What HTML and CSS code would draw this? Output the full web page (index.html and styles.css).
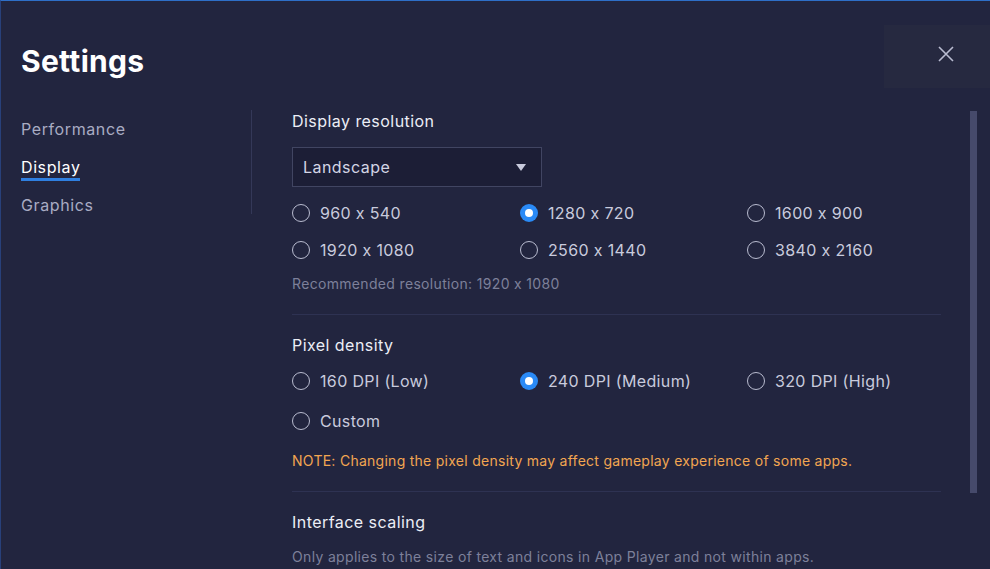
FILE: index.html
```html
<!DOCTYPE html>
<html lang="en">
<head>
<meta charset="utf-8">
<title>Settings</title>
<link rel="stylesheet" href="styles.css">
</head>
<body>
<div class="window">
  <header class="header">
    <h1 class="title">Settings</h1>
    <button class="close" aria-label="Close">
      <svg width="16" height="16" viewBox="0 0 16 16"><path d="M1 1L15 15M15 1L1 15" stroke="#b9bcd1" stroke-width="1.6" fill="none"/></svg>
    </button>
  </header>
  <div class="body">
    <nav class="nav">
      <div class="nav-list">
        <div class="nav-item"><span>Performance</span></div>
        <div class="nav-item active"><span>Display</span></div>
        <div class="nav-item"><span>Graphics</span></div>
      </div>
    </nav>
    <main class="content">
      <div class="section-title">Display resolution</div>
      <div class="select">
        <span>Landscape</span>
        <span class="arrow"></span>
      </div>
      <div class="radio-grid res">
        <label class="radio"><span class="dot"></span>960 x 540</label>
        <label class="radio checked"><span class="dot"></span>1280 x 720</label>
        <label class="radio"><span class="dot"></span>1600 x 900</label>
        <label class="radio"><span class="dot"></span>1920 x 1080</label>
        <label class="radio"><span class="dot"></span>2560 x 1440</label>
        <label class="radio"><span class="dot"></span>3840 x 2160</label>
      </div>
      <div class="hint rec">Recommended resolution: 1920 x 1080</div>
      <div class="divider"></div>
      <div class="section-title pd">Pixel density</div>
      <div class="radio-grid dpi">
        <label class="radio"><span class="dot"></span>160 DPI (Low)</label>
        <label class="radio checked"><span class="dot"></span>240 DPI (Medium)</label>
        <label class="radio"><span class="dot"></span>320 DPI (High)</label>
        <label class="radio"><span class="dot"></span>Custom</label>
      </div>
      <div class="note">NOTE: Changing the pixel density may affect gameplay experience of some apps.</div>
      <div class="divider"></div>
      <div class="section-title is">Interface scaling</div>
      <div class="hint only">Only applies to the size of text and icons in App Player and not within apps.</div>
    </main>
    <div class="scrollbar"></div>
  </div>
</div>
</body>
</html>
```

FILE: styles.css
```css
html, body {
  margin: 0;
  padding: 0;
  height: 100%;
  overflow: hidden;
  background: #22253f;
}
body {
  font-family: Inter, "Noto Sans", sans-serif;
  font-feature-settings: "calt" 0;
  color: #c7c9dc;
}
.window {
  height: 100%;
  box-sizing: border-box;
  border-top: 1px solid #2e6fc8;
  border-left: 1px solid #28407a;
  background: #22253f;
  overflow: hidden;
}
.header {
  height: 109px;
  display: flex;
  justify-content: space-between;
  align-items: flex-start;
}
.title {
  margin: 42px 0 0 20px;
  font-size: 30px;
  line-height: 36px;
  font-weight: 700;
  color: #ffffff;
  letter-spacing: 0.3px;
}
.close {
  margin-top: 24px;
  width: 106px;
  height: 63px;
  border: 0;
  padding: 0 0 5px 18px;
  background: #262940;
  display: flex;
  align-items: center;
  justify-content: center;
}
.close svg { display: block; }
.body {
  display: flex;
  align-items: flex-start;
}
.nav {
  width: 251px;
  flex: none;
}
.nav-list {
  height: 104px;
  border-right: 1px solid #343858;
}
.nav-item {
  height: 38px;
  box-sizing: border-box;
  padding: 9px 0 0 20px;
  display: flex;
  flex-direction: column;
  align-items: flex-start;
  font-size: 16px;
  line-height: 20px;
  letter-spacing: 0.6px;
  color: #a9acc3;
}
.nav-item.active span {
  color: #ffffff;
  padding-bottom: 1px;
  border-bottom: 3px solid #2f7fe0;
}
.content {
  margin-left: 40px;
  width: 649px;
  flex: none;
}
.section-title {
  font-size: 16px;
  line-height: 22px;
  letter-spacing: 0.45px;
  color: #eceef6;
  font-weight: 400;
}
.select {
  margin-top: 15px;
  width: 250px;
  height: 40px;
  box-sizing: border-box;
  border: 1px solid #414562;
  background: #1c1e36;
  display: flex;
  align-items: center;
  justify-content: space-between;
  padding: 0 15px 0 10px;
  font-size: 16px;
  letter-spacing: 0.45px;
  color: #d3d5e5;
}
.arrow {
  width: 0;
  height: 0;
  border-left: 5px solid transparent;
  border-right: 5px solid transparent;
  border-top: 7px solid #c9cbdd;
  margin-top: 1px;
}
.radio-grid {
  display: grid;
  grid-template-columns: 228px 227px 1fr;
}
.res { margin-top: 7px; grid-auto-rows: 37px; }
.dpi { margin-top: 5px; grid-auto-rows: 40px; }
.radio {
  display: flex;
  align-items: center;
  gap: 10px;
  font-size: 16px;
  letter-spacing: 0.35px;
  color: #c9cbdd;
}
.dot {
  width: 18px;
  height: 18px;
  box-sizing: border-box;
  border-radius: 50%;
  border: 1.5px solid #b9bcd0;
  flex: none;
  display: flex;
  align-items: center;
  justify-content: center;
}
.radio.checked .dot {
  border: none;
  background: #2a8af6;
}
.radio.checked .dot::after {
  content: "";
  width: 8px;
  height: 8px;
  border-radius: 50%;
  background: #ffffff;
}
.hint {
  font-size: 14px;
  line-height: 20px;
  letter-spacing: 0.33px;
  color: #7d809a;
}
.rec { margin-top: 6px; }
.divider {
  margin-top: 20px;
  height: 1px;
  background: #2e3252;
}
.pd { margin-top: 19px; }
.note {
  margin-top: 10px;
  font-size: 14px;
  line-height: 20px;
  letter-spacing: 0.27px;
  color: #f2a651;
}
.is { margin-top: 19px; }
.only { margin-top: 14px; }
.scrollbar {
  margin: 1px 0 0 29px;
  width: 7px;
  height: 382px;
  background: #464a6b;
  flex: none;
}
```
